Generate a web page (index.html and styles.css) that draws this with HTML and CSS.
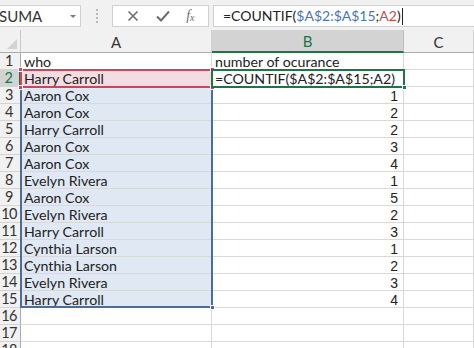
FILE: index.html
```html
<!DOCTYPE html>
<html>
<head>
<meta charset="utf-8">
<link rel="stylesheet" href="styles.css">
</head>
<body>
<div class="app">
  <div class="toolbar">
    <div class="namebox"><span class="nb-text">SUMA</span><span class="nb-arrow"></span></div>
    <div class="grip"><i></i><i></i><i></i><i></i></div>
    <div class="btnbox">
      <svg class="ico" width="14" height="14" viewBox="0 0 14 14"><path d="M2.5 2.5 L11.5 11.5 M11.5 2.5 L2.5 11.5" stroke="#6d6d6d" stroke-width="1.6" fill="none"/></svg>
      <svg class="ico" width="16" height="14" viewBox="0 0 16 14"><path d="M2 7.5 L6 11.5 L14 2.5" stroke="#6d6d6d" stroke-width="2" fill="none"/></svg>
      <span class="fx">f<sub>x</sub></span>
    </div>
    <div class="formula">=COUNTIF(<span class="blue">$A$2:$A$15</span>;<span class="red">A2</span>)<span class="caret"></span></div>
  </div>
  <div class="sheet">
    <div class="grid">
      <div class="corner"><span class="tri"></span></div>
      <div class="ch">A</div>
      <div class="ch sel">B</div>
      <div class="ch">C</div>

      <div class="rh">1</div><div class="c">who</div><div class="c">number of ocurance</div><div class="c"></div>
      <div class="rh sel">2</div><div class="c pink">Harry Carroll</div><div class="c">=COUNTIF($A$2:$A$15;A2)</div><div class="c"></div>
      <div class="rh">3</div><div class="c blue-f">Aaron Cox</div><div class="c num">1</div><div class="c"></div>
      <div class="rh">4</div><div class="c blue-f">Aaron Cox</div><div class="c num">2</div><div class="c"></div>
      <div class="rh">5</div><div class="c blue-f">Harry Carroll</div><div class="c num">2</div><div class="c"></div>
      <div class="rh">6</div><div class="c blue-f">Aaron Cox</div><div class="c num">3</div><div class="c"></div>
      <div class="rh">7</div><div class="c blue-f">Aaron Cox</div><div class="c num">4</div><div class="c"></div>
      <div class="rh">8</div><div class="c blue-f">Evelyn Rivera</div><div class="c num">1</div><div class="c"></div>
      <div class="rh">9</div><div class="c blue-f">Aaron Cox</div><div class="c num">5</div><div class="c"></div>
      <div class="rh">10</div><div class="c blue-f">Evelyn Rivera</div><div class="c num">2</div><div class="c"></div>
      <div class="rh">11</div><div class="c blue-f">Harry Carroll</div><div class="c num">3</div><div class="c"></div>
      <div class="rh">12</div><div class="c blue-f">Cynthia Larson</div><div class="c num">1</div><div class="c"></div>
      <div class="rh">13</div><div class="c blue-f">Cynthia Larson</div><div class="c num">2</div><div class="c"></div>
      <div class="rh">14</div><div class="c blue-f">Evelyn Rivera</div><div class="c num">3</div><div class="c"></div>
      <div class="rh">15</div><div class="c blue-f">Harry Carroll</div><div class="c num">4</div><div class="c"></div>
      <div class="rh">16</div><div class="c"></div><div class="c"></div><div class="c"></div>
      <div class="rh">17</div><div class="c"></div><div class="c"></div><div class="c"></div>
      <div class="rh">18</div><div class="c"></div><div class="c"></div><div class="c"></div>
    </div>
    <div class="range-blue"><span class="h tl"></span><span class="h br"></span></div>
    <div class="range-red"><span class="h tl"></span><span class="h tr"></span><span class="h bl"></span><span class="h br"></span></div>
    <div class="active"><span class="h br"></span></div>
  </div>
</div>
</body>
</html>
```
FILE: styles.css
```css
* { box-sizing: border-box; }
html, body { margin: 0; padding: 0; }
body { width: 474px; height: 348px; overflow: hidden; background: #fff; font-family: Lato, "Liberation Sans", sans-serif; color: #222; }
.app { width: 474px; }

.toolbar { height: 30px; background: #f1f1f1; display: flex; align-items: flex-start; padding-top: 5px; }
.namebox { width: 81px; height: 22px; background: #fff; border: 1px solid #d0d0d0; border-left: none; display: flex; align-items: center; justify-content: space-between; padding-right: 4px; }
.nb-text { font-size: 15px; color: #333; margin-left: -1px; }
.nb-arrow { width: 0; height: 0; border-left: 3px solid transparent; border-right: 3px solid transparent; border-top: 3px solid #7a7a7a; }
.grip { width: 31px; height: 22px; display: flex; flex-direction: column; align-items: center; justify-content: center; gap: 2px; }
.grip i { width: 2px; height: 2px; background: #b9b9b9; display: block; }
.btnbox { width: 97px; height: 22px; background: #fff; border: 1px solid #d0d0d0; display: flex; align-items: center; justify-content: space-around; padding: 0 6px; }
.ico { display: block; }
.fx { font-family: "Liberation Serif", serif; font-style: italic; font-size: 14px; color: #6d6d6d; line-height: 1; }
.fx sub { font-size: 10px; vertical-align: -1px; }
.formula { margin-left: 4px; flex: 1; height: 22px; background: #fff; border: 1px solid #d0d0d0; border-right: none; font-size: 14px; line-height: 20px; padding-left: 9px; color: #222; display: flex; align-items: center; white-space: nowrap; }
.formula .blue { color: #4a75b5; }
.formula .red { color: #c0504d; }
.caret { display: inline-block; width: 1px; height: 17px; background: #222; margin-left: 1px; }

.sheet { position: relative; }
.grid { display: grid; grid-template-columns: 21px 191px 192px 70px; grid-template-rows: 23px repeat(18, 17px); }
.corner { background: #f1f1f1; border-right: 1px solid #c9c9c9; border-bottom: 1px solid #ababab; position: relative; }
.tri { position: absolute; right: 3px; bottom: 3px; width: 0; height: 0; border-left: 10px solid transparent; border-bottom: 10px solid #d2d2d2; }
.ch { background: #f1f1f1; border-right: 1px solid #d0d0d0; border-bottom: 1px solid #ababab; font-size: 15px; color: #333; display: flex; align-items: center; justify-content: center; padding-top: 1px; }
.ch.sel { background: #d3d3d3; color: #217346; border-bottom: 2px solid #217346; border-right-color: #bdbdbd; }
.rh { background: #f1f1f1; border-right: 1px solid #ababab; border-bottom: 1px solid #d4d4d4; font-size: 14.5px; letter-spacing: -0.6px; color: #333; display: flex; align-items: center; justify-content: center; line-height: 1; overflow: hidden; white-space: nowrap; padding: 1px 2px 0 0; }
.rh.sel { background: #d3d3d3; color: #217346; border-right: 2px solid #217346; }
.c { border-right: 1px solid #d9d9d9; border-bottom: 1px solid #d9d9d9; font-size: 14.2px; line-height: 16px; padding: 1px 3px 0 3px; white-space: nowrap; overflow: hidden; color: #222; }
.c.num { text-align: right; font-family: "Liberation Sans", Arial, sans-serif; font-size: 14px; padding-right: 5px; }
.c.pink { background: #f2dde2; }
.c.blue-f { background: #dfe8f3; }

.range-blue { position: absolute; left: 20px; top: 39px; width: 193px; height: 239px; border: 2px solid #4d6c98; pointer-events: none; }
.range-red { position: absolute; left: 20px; top: 39px; width: 193px; height: 19px; border: 2px solid #c24a5c; }
.active { position: absolute; left: 211px; top: 39px; width: 194px; height: 19px; border: 2px solid #217346; }
.h { position: absolute; width: 5px; height: 5px; border: 1px solid #fff; }
.range-blue .h { background: #4d6c98; }
.range-red .h { background: #c24a5c; }
.active .h { background: #217346; }
.tl { left: -4px; top: -4px; }
.tr { right: -4px; top: -4px; }
.bl { left: -4px; bottom: -4px; }
.br { right: -4px; bottom: -4px; }
```
